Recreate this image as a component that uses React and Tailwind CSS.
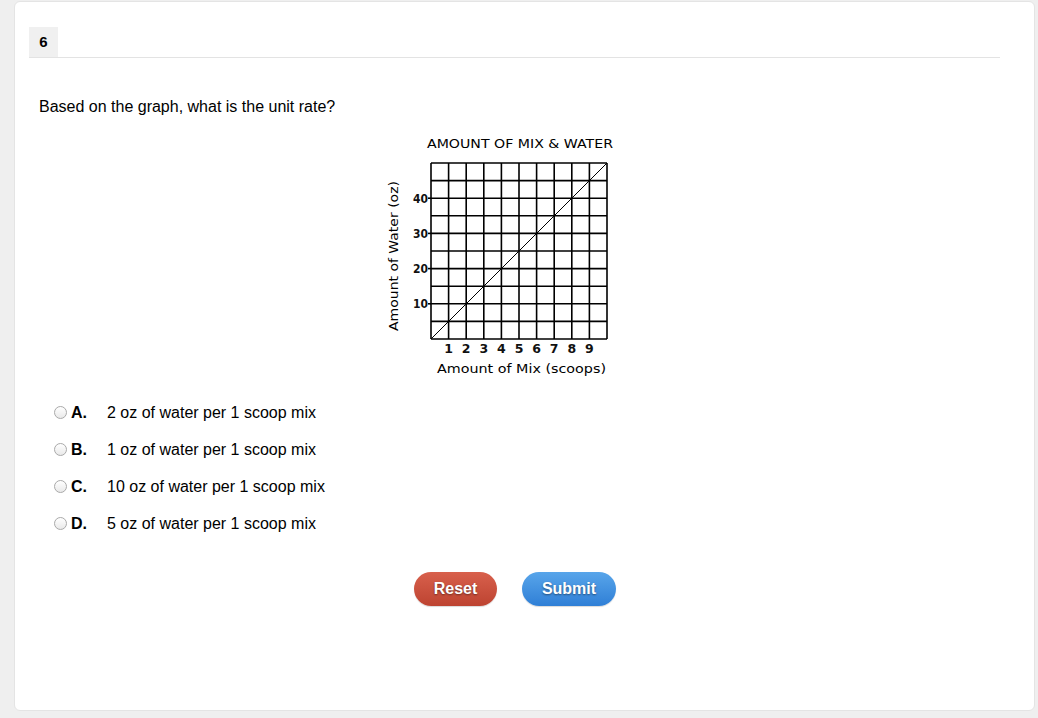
import React from "react";

const options = [
  { letter: "A.", text: "2 oz of water per 1 scoop mix" },
  { letter: "B.", text: "1 oz of water per 1 scoop mix" },
  { letter: "C.", text: "10 oz of water per 1 scoop mix" },
  { letter: "D.", text: "5 oz of water per 1 scoop mix" },
];

function Graph() {
  const x0 = 51;
  const y0 = 32;
  const size = 176;
  const step = size / 10;
  const lines = [];
  for (let i = 0; i <= 10; i++) {
    lines.push(
      <line key={"v" + i} x1={x0 + i * step} y1={y0} x2={x0 + i * step} y2={y0 + size} stroke="#000" strokeWidth="1.6" />
    );
    lines.push(
      <line key={"h" + i} x1={x0} y1={y0 + i * step} x2={x0 + size} y2={y0 + i * step} stroke="#000" strokeWidth="1.6" />
    );
  }
  const yLabels = [40, 30, 20, 10];
  return (
    <svg width="240" height="250" viewBox="0 0 240 250" style={{ fontFamily: "'DejaVu Sans', Verdana, sans-serif" }}>
      <text x="140" y="17" fontSize="11.5" textAnchor="middle" textLength="186" lengthAdjust="spacingAndGlyphs" fill="#000">
        AMOUNT OF MIX &amp; WATER
      </text>
      {lines}
      <line x1={x0} y1={y0 + size} x2={x0 + size} y2={y0} stroke="#000" strokeWidth="1" />
      {yLabels.map((v, i) => {
        const y = y0 + (2 + i * 2) * step;
        return (
          <g key={v}>
            <line x1={x0 - 3} y1={y} x2={x0} y2={y} stroke="#000" strokeWidth="1.6" />
            <text x={x0 - 3} y={y + 4.5} fontSize="12.5" fontWeight="600" textAnchor="end" textLength="15" lengthAdjust="spacingAndGlyphs" fill="#111">
              {v}
            </text>
          </g>
        );
      })}
      {[1, 2, 3, 4, 5, 6, 7, 8, 9].map((n) => (
        <text key={n} x={x0 + n * step} y="222" fontSize="12.5" fontWeight="600" textAnchor="middle" fill="#111">
          {n}
        </text>
      ))}
      <text x="141.5" y="242" fontSize="12" textAnchor="middle" textLength="169" lengthAdjust="spacingAndGlyphs" fill="#000">
        Amount of Mix (scoops)
      </text>
      <text
        x="0"
        y="0"
        fontSize="12"
        textAnchor="middle"
        textLength="150"
        lengthAdjust="spacingAndGlyphs"
        fill="#000"
        transform="translate(18 125) rotate(-90)"
      >
        Amount of Water (oz)
      </text>
    </svg>
  );
}

export default function App() {
  return (
    <div className="min-h-screen bg-[#efefef] pl-[14px] pr-[3px] pt-[1px]" style={{ fontFamily: "'Liberation Sans', Arial, sans-serif" }}>
      <div className="h-[710px] bg-white rounded-md border border-[#e4e4e4] pl-[14px] pr-[34px] pt-[25px]">
        {/* question number */}
        <div className="flex border-b border-[#e3e3e3]">
          <div className="w-[29px] h-[30px] bg-[#f0f0f0] flex items-center justify-center text-[15px] font-bold text-black">
            6
          </div>
        </div>

        <p className="ml-[10px] mt-[40px] text-[16px] leading-[18px] text-black">Based on the graph, what is the unit rate?</p>

        <div className="ml-[351px] mt-[15px]">
          <Graph />
        </div>

        <div className="ml-[25px] mt-[13px]">
          {options.map((o) => (
            <label key={o.letter} className="h-[37px] flex items-center text-[16px] text-black cursor-pointer">
              <span className="w-[13px] h-[13px] rounded-full border border-[#a9a9a9] bg-gradient-to-b from-white to-[#e9e9e9] shrink-0" />
              <span className="ml-[4px] w-[36px] font-bold">{o.letter}</span>
              <span>{o.text}</span>
            </label>
          ))}
        </div>

        <div className="ml-[385px] mt-[30px] flex gap-[25px]">
          <button className="w-[83px] h-[34px] rounded-full bg-gradient-to-b from-[#d8604c] to-[#bd4331] text-white font-bold text-[16px] [text-shadow:0_1px_2px_rgba(0,0,0,0.45)] shadow-[0_1px_1px_rgba(0,0,0,0.15)]">
            Reset
          </button>
          <button className="w-[94px] h-[34px] rounded-full bg-gradient-to-b from-[#58a5ea] to-[#2f7fd6] text-white font-bold text-[16px] [text-shadow:0_1px_2px_rgba(0,0,0,0.45)] shadow-[0_1px_1px_rgba(0,0,0,0.15)]">
            Submit
          </button>
        </div>
      </div>
    </div>
  );
}
